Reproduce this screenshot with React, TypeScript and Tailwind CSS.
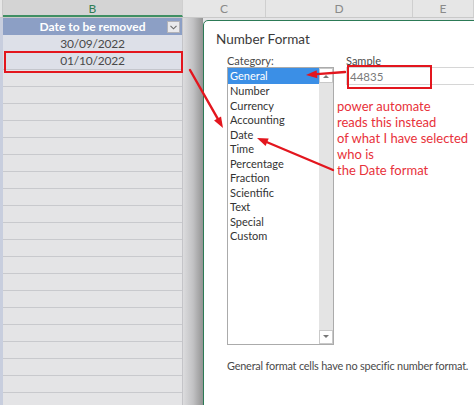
import React from 'react';

const categories = [
  'General',
  'Number',
  'Currency',
  'Accounting',
  'Date',
  'Time',
  'Percentage',
  'Fraction',
  'Scientific',
  'Text',
  'Special',
  'Custom',
];

const columns = [
  { name: 'B', width: 'w-[180px]', active: true },
  { name: 'C', width: 'w-[83px]', active: false },
  { name: 'D', width: 'w-[147px]', active: false },
  { name: 'E', width: 'w-[61px]', active: false },
];

// строки листа под таблицей (затемнены диалогом)
const emptyRows = Array.from({ length: 20 }, (_, i) => i);

const Arrow: React.FC<{ x1: number; y1: number; x2: number; y2: number }> = ({ x1, y1, x2, y2 }) => {
  const angle = Math.atan2(y2 - y1, x2 - x1);
  const len = 11;
  const half = 4;
  const bx = x2 - len * Math.cos(angle);
  const by = y2 - len * Math.sin(angle);
  const px = -Math.sin(angle) * half;
  const py = Math.cos(angle) * half;
  return (
    <g>
      <line x1={x1} y1={y1} x2={bx} y2={by} stroke="#e3161e" strokeWidth={2.4} strokeLinecap="round" />
      <polygon points={`${x2},${y2} ${bx + px},${by + py} ${bx - px},${by - py}`} fill="#e3161e" />
    </g>
  );
};

export default function App() {
  return (
    <div
      className="relative w-[474px] h-[405px] overflow-hidden bg-[#e4e4e6]"
      style={{ fontFamily: 'Lato, "Noto Sans", sans-serif' }}
    >
      {/* Заголовки столбцов */}
      <div className="flex h-[18px] bg-[#e6e6e6] border-b border-[#c9c9c9] text-[12px] leading-[17px] text-[#8a8a8a]">
        <div className="w-[3px] border-r border-[#c9c9c9]" />
        {columns.map((c) => (
          <div
            key={c.name}
            className={`${c.width} shrink-0 text-center border-r border-[#cfcfcf] ${
              c.active ? 'bg-[#d4d4d4] text-[#2f7d55] border-b-2 border-b-[#3f8f63]' : ''
            }`}
          >
            {c.name}
          </div>
        ))}
      </div>

      {/* Лист */}
      <div className="flex">
        <div className="w-[3px] bg-[#c8cede]" />
        <div className="w-[180px] flex flex-col border-r border-[#c4c4c8]">
          <div className="relative h-[17px] bg-[#8c9fc5] flex items-center justify-center">
            <span className="text-white font-bold text-[12px] leading-[17px]">Date to be removed</span>
            <div className="absolute right-[2px] top-[3px] w-[13px] h-[12px] bg-[#e9e9ec] border border-[#b3b3b8] flex items-center justify-center">
              <svg width="7" height="5" viewBox="0 0 7 5">
                <path d="M0.5 0.8 L3.5 3.8 L6.5 0.8" stroke="#6a6a6a" strokeWidth="1.1" fill="none" />
              </svg>
            </div>
          </div>
          <div className="h-[17px] bg-[#dde0e8] text-center text-[12px] tracking-[-0.2px] leading-[18px] text-[#4a4a4a]">
            30/09/2022
          </div>
          <div className="h-[18px] bg-[#dde0e8] text-center text-[12px] tracking-[-0.2px] leading-[18px] text-[#4a4a4a] border-b border-[#c4c6cc]">
            01/10/2022
          </div>
          {emptyRows.map((r) => (
            <div key={r} className="h-[17px] shrink-0 border-b border-[#c8c9cd]" />
          ))}
        </div>
        {/* тень диалога на столбце C */}
        <div className="w-[20px] bg-gradient-to-r from-[#dcdcde] via-[#c2c2c4] to-[#949494]" />
      </div>

      {/* Диалог Number Format */}
      <div className="absolute left-[203px] top-[20px] w-[290px] h-[400px] bg-white border border-[#2c7a56] rounded-tl-[5px]">
        <div className="pl-[12px] pt-[8px] text-[13.5px] leading-[20px] text-[#3a3a3a]">Number Format</div>
        <div className="flex pl-[23px] mt-[5px]">
          <div className="w-[107px] flex flex-col">
            <div className="text-[11px] leading-[13px] text-[#4a4a4a]">Category:</div>
            <div className="h-[278px] border border-[#ababab] flex">
              <div className="flex-1 flex flex-col">
                {categories.map((c) => (
                  <div
                    key={c}
                    className={`pl-[2px] text-[11px] ${
                      c === 'General'
                        ? 'bg-[#3b8fe6] text-white h-[16px] leading-[16px]'
                        : 'text-[#333] h-[14.5px] leading-[14.5px]'
                    }`}
                  >
                    {c}
                  </div>
                ))}
              </div>
              <div className="w-[14px] bg-[#e4e4e4] flex flex-col justify-between">
                <div className="h-[15px] bg-white border border-[#c9c9c9] flex items-center justify-center">
                  <svg width="6" height="4" viewBox="0 0 6 4">
                    <path d="M0 4 L3 1 L6 4 Z" fill="#777" />
                  </svg>
                </div>
                <div className="h-[14px] bg-white border border-[#c9c9c9] flex items-center justify-center">
                  <svg width="6" height="4" viewBox="0 0 6 4">
                    <path d="M0 0 L3 3 L6 0 Z" fill="#777" />
                  </svg>
                </div>
              </div>
            </div>
          </div>

          <div className="ml-[12px] flex-1 flex flex-col">
            <div className="text-[11px] leading-[13px] text-[#4a4a4a]">Sample</div>
            <div className="h-[18px] border border-[#d6d6d6] border-r-0 pl-[3px] text-[11.5px] leading-[17px] text-[#7a7a7a]">
              44835
            </div>
            <div className="mt-[13px] ml-[-9px] text-[13px] leading-[16px] text-[#e8313a] whitespace-nowrap">
              <div>power automate</div>
              <div>reads this instead</div>
              <div>of what I have selected</div>
              <div>who is</div>
              <div>the Date format</div>
            </div>
          </div>
        </div>
        <div className="pl-[23px] mt-[14px] text-[10.9px] tracking-[-0.2px] leading-[14px] text-[#4a4a4a] whitespace-nowrap">
          General format cells have no specific number format.
        </div>
      </div>

      {/* Красные пометки */}
      <div className="absolute left-[4px] top-[51px] w-[179px] h-[22px] border-[2.5px] border-[#e3161e]" />
      <div className="absolute left-[347px] top-[65px] w-[85px] h-[24px] border-[2.5px] border-[#e3161e]" />
      <svg className="absolute left-0 top-0 pointer-events-none" width="474" height="405">
        <Arrow x1={190} y1={70} x2={223} y2={128} />
        <Arrow x1={345} y1={72} x2={306} y2={75} />
        <Arrow x1={333} y1={170} x2={257} y2={138} />
      </svg>
    </div>
  );
}
